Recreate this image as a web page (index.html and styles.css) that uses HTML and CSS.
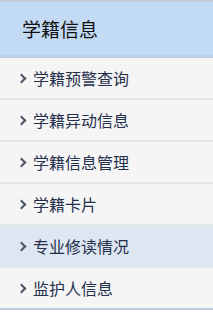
FILE: index.html
```html
<!DOCTYPE html>
<html lang="zh-CN">
<head>
    <meta charset="UTF-8">
    <meta name="viewport" content="width=device-width, initial-scale=1.0">
    <title>学籍信息</title>
    <link rel="stylesheet" href="styles.css">
</head>
<body>
    <div class="sidebar">
        <div class="sidebar-title">学籍信息</div>
        <ul class="menu">
            <li class="menu-item"><span class="arrow"></span>学籍预警查询</li>
            <li class="menu-item"><span class="arrow"></span>学籍异动信息</li>
            <li class="menu-item"><span class="arrow"></span>学籍信息管理</li>
            <li class="menu-item"><span class="arrow"></span>学籍卡片</li>
            <li class="menu-item active"><span class="arrow"></span>专业修读情况</li>
            <li class="menu-item"><span class="arrow"></span>监护人信息</li>
        </ul>
    </div>
</body>
</html>
```

FILE: styles.css
```css
body {
    margin: 0;
    background-color: #ffffff;
    font-family: "Noto Sans CJK SC", "Liberation Sans", sans-serif;
}

.sidebar {
    width: 100%;
}

.sidebar-title {
    height: 53px;
    line-height: 53px;
    padding-left: 22px;
    font-size: 19px;
    color: #111111;
    background-color: #c3daf4;
    border-top: 2px solid #c3cbd3;
    border-bottom: 3px solid #bcd0e4;
}

.menu {
    list-style: none;
    margin: 0;
    padding: 0;
}

.menu-item {
    display: flex;
    align-items: center;
    height: 40px;
    padding-left: 18px;
    font-size: 16px;
    color: #25304d;
    background-color: #f5f5f5;
    border-bottom: 2px solid #e4e6e9;
}

.menu-item.active {
    background-color: #dde6f1;
    border-bottom-color: #dde6f1;
}

.menu-item:last-child {
    border-bottom-color: #bccbdb;
}

.arrow {
    width: 5px;
    height: 5px;
    margin-right: 8px;
    border-top: 2px solid #4d5566;
    border-right: 2px solid #4d5566;
    transform: rotate(45deg);
}
```
